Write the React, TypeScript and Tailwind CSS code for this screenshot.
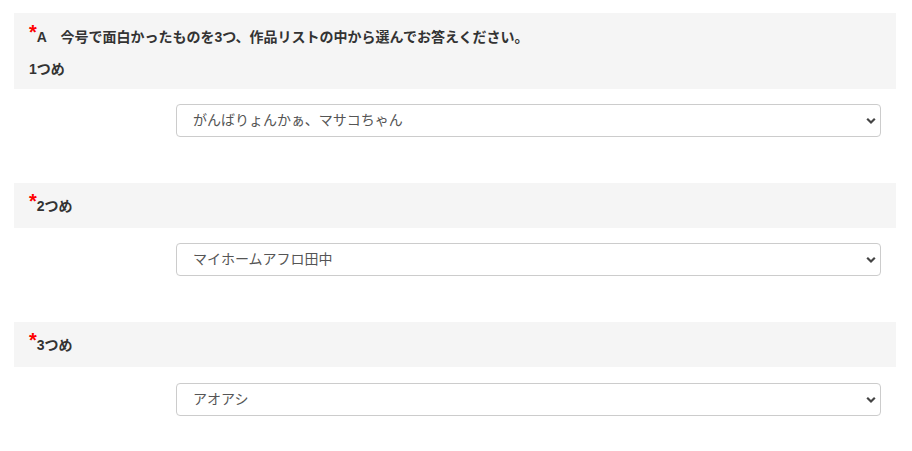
import React from "react";

const font = {
  fontFamily: '"Liberation Sans", "Noto Sans CJK JP", sans-serif',
};

function Chevron() {
  return (
    <svg
      className="pointer-events-none absolute right-[5px] top-1/2 -translate-y-1/2"
      width="10"
      height="7"
      viewBox="0 0 10 7"
    >
      <path d="M1.2 1.3 L5 5 L8.8 1.3" fill="none" stroke="#444" strokeWidth="2.2" />
    </svg>
  );
}

function SelectBox({ value }: { value: string }) {
  return (
    <div className="pl-[162px] pr-[15px]">
      <div className="relative h-[33px] w-full">
        <select
          defaultValue={value}
          className="h-[33px] w-full appearance-none rounded-[4px] border border-[#cccccc] bg-white pl-[16px] pr-[30px] text-[14px] leading-[31px] text-[#555555] outline-none"
          style={font}
        >
          <option value={value}>{value}</option>
        </select>
        <Chevron />
      </div>
    </div>
  );
}

function Star() {
  return (
    <span className="relative top-[-3px] text-[20px] font-bold leading-[0] text-[#ff0000]">*</span>
  );
}

export default function App() {
  return (
    <div className="min-h-[451px] w-[912px] bg-white pt-[13px]" style={font}>
      <div className="ml-[14px] mr-[16px]">
        <div className="h-[76px] bg-[#f5f5f5] px-[15px] pt-[14px] text-[14px] font-bold text-[#333333]">
          <div className="h-[20px] leading-[20px]">
            <Star />
            A　今号で面白かったものを3つ、作品リストの中から選んでお答えください。
          </div>
          <div className="mt-[12px] h-[20px] leading-[20px]">1つめ</div>
        </div>
        <div className="mt-[15px]">
          <SelectBox value="がんばりょんかぁ、マサコちゃん" />
        </div>

        <div className="mt-[46px] flex h-[45px] items-center bg-[#f5f5f5] px-[15px] text-[14px] font-bold text-[#333333]">
          <div className="h-[20px] leading-[20px]">
            <Star />
            2つめ
          </div>
        </div>
        <div className="mt-[15px]">
          <SelectBox value="マイホームアフロ田中" />
        </div>

        <div className="mt-[46px] flex h-[45px] items-center bg-[#f5f5f5] px-[15px] text-[14px] font-bold text-[#333333]">
          <div className="h-[20px] leading-[20px]">
            <Star />
            3つめ
          </div>
        </div>
        <div className="mt-[16px]">
          <SelectBox value="アオアシ" />
        </div>
      </div>
    </div>
  );
}
